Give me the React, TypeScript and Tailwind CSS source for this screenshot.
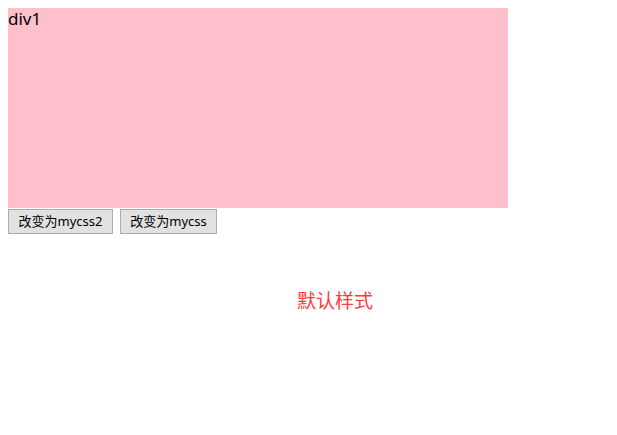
import * as React from 'react'

export default function App() {
  const [cls, setCls] = React.useState('default')

  return (
    <div className="min-h-screen bg-white p-2 font-['Noto_Sans','Noto_Sans_CJK_SC',sans-serif] text-black">
      <div className="h-[200px] w-[500px] bg-[#ffc0cb] text-[17px] leading-[22px]">div1</div>
      <div className="mt-px flex gap-[7px]">
        <button
          onClick={() => setCls('mycss2')}
          className="h-[25px] w-[105px] border border-[#adadad] bg-[#e1e1e1] text-[13px] leading-none"
        >
          改变为mycss2
        </button>
        <button
          onClick={() => setCls('mycss')}
          className="h-[25px] w-[97px] border border-[#adadad] bg-[#e1e1e1] text-[13px] leading-none"
        >
          改变为mycss
        </button>
      </div>
      <div className="ml-[289px] mt-[55px] text-[19px] leading-6 text-[#ff3b3b]" data-cls={cls}>
        默认样式
      </div>
    </div>
  )
}
